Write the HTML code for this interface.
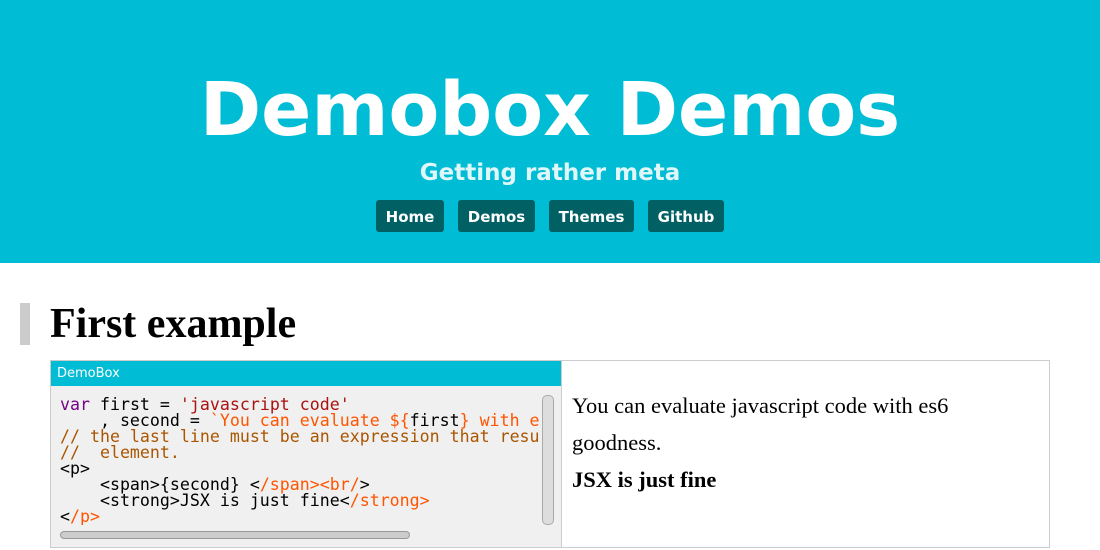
<!DOCTYPE html>
<html><head><style>
body{margin:0;width:1100px;height:550px;overflow:hidden;background:#fff;font-family:"Liberation Serif",serif}
.hd{position:absolute;left:0;top:0;width:1100px;height:263px;background:#00bcd4;text-align:center;font-family:"DejaVu Sans","Liberation Sans",sans-serif;color:#fff}
.t{position:absolute;left:0;width:1100px;top:62px;font-size:74px;font-weight:bold;line-height:96px}
.s{position:absolute;left:0;width:1100px;top:158px;font-size:23px;font-weight:bold;color:#e0f7fa;line-height:30px}
.b{position:absolute;top:200px;height:32px;background:#006064;border-radius:3px;font-size:15px;font-weight:bold;line-height:34px;text-align:center}
.bar{position:absolute;left:20px;top:303px;width:10px;height:42px;background:#ccc}
h1{position:absolute;left:50px;top:299px;margin:0;font-size:42px;line-height:50px;font-weight:bold}
.box{position:absolute;left:50px;top:360px;width:998px;height:186px;border:1px solid #ccc}
.l{position:absolute;left:0;top:0;width:510px;height:186px;border-right:1px solid #ccc;background:#f0f0f0}
.lh{height:25px;background:#00bcd4;color:#fff;font:13px/25px "DejaVu Sans",sans-serif;padding-left:6px}
pre{position:absolute;left:9px;top:36px;margin:0;width:480px;overflow:hidden;font:16.6px/16px "DejaVu Sans Mono",monospace;color:#000}
.k{color:#770088}.st{color:#aa1111}.o{color:#ff5500}.c{color:#aa5500}
.vs{position:absolute;left:491px;top:34px;width:10px;height:128px;border:1px solid #aaa;border-radius:5px;background:#ddd}
.hs{position:absolute;left:9px;top:170px;width:348px;height:6px;border:1px solid #999;border-radius:4px;background:#ccc}
.r{position:absolute;left:521px;top:26px;font-size:22.5px;line-height:37px;width:420px}
</style></head><body>
<div class="hd">
<div class="t">Demobox Demos</div>
<div class="s">Getting rather meta</div>
<div class="b" style="left:376px;width:68px">Home</div>
<div class="b" style="left:458px;width:77px">Demos</div>
<div class="b" style="left:549px;width:85px">Themes</div>
<div class="b" style="left:648px;width:76px">Github</div>
</div>
<div class="bar"></div>
<h1>First example</h1>
<div class="box">
<div class="l"><div class="lh">DemoBox</div>
<pre><span class="k">var</span> first = <span class="st">'javascript code'</span>
    , second = <span class="o">`You can evaluate ${</span>first<span class="o">} with es6</span>
<span class="c">// the last line must be an expression that results</span>
<span class="c">//  element.</span>
&lt;p&gt;
    &lt;span&gt;{second} &lt;<span class="o">/span&gt;&lt;br/</span>&gt;
    &lt;strong&gt;JSX is just fine&lt;<span class="o">/strong&gt;</span>
&lt;<span class="o">/p&gt;</span></pre>
<div class="vs"></div><div class="hs"></div>
</div>
<div class="r">You can evaluate javascript code with es6 goodness.<br><b>JSX is just fine</b></div>
</div>
</body></html>
